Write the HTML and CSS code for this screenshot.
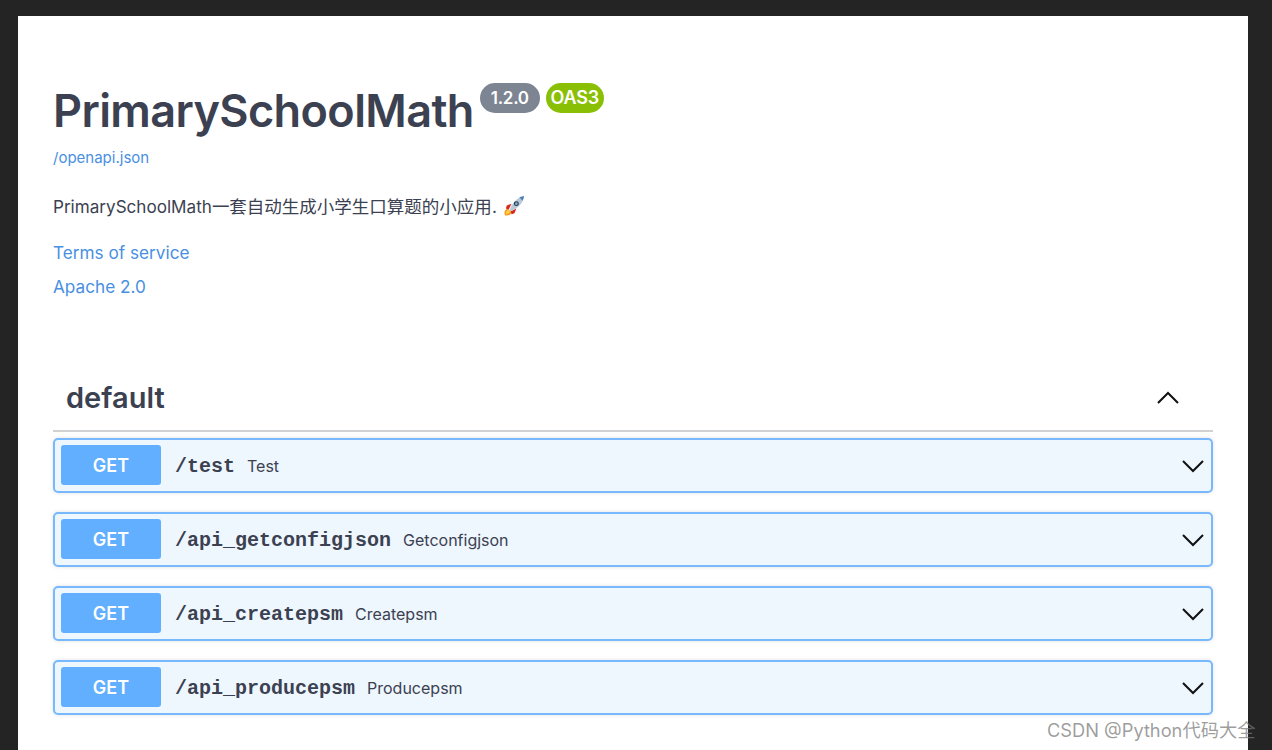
FILE: index.html
```html
<!DOCTYPE html>
<html lang="zh">
<head>
<meta charset="utf-8">
<title>PrimarySchoolMath</title>
<link rel="stylesheet" href="styles.css">
</head>
<body>
<main class="page">
  <header class="info">
    <div class="title-row">
      <h1 class="title">PrimarySchoolMath</h1>
      <span class="badge badge-version">1.2.0</span>
      <span class="badge badge-oas">OAS3</span>
    </div>
    <a class="spec-link">/openapi.json</a>
    <p class="description"><span>PrimarySchoolMath<span class="cjk">一套自动生成小学生口算题的小应用</span>.</span>
      <svg class="rocket" viewBox="0 0 24 24" aria-hidden="true">
        <path d="M3 21c-1-3 0-6 3-7l4 4c-1 3-4 4-7 3z" fill="#f59a1d"/>
        <path d="M4 20c0-2 1-4 2.500-4.500l2 2C8 19 6 20 4 20z" fill="#ffd23f"/>
        <path d="M5 11l5-2-3 6-3-1z" fill="#d9281e"/>
        <path d="M13 19l2-5-6 3 1 3z" fill="#d9281e"/>
        <path d="M8 16C10 9 15 3 23 1c-1 8-7 13-14 16z" fill="#b9c9d8"/>
        <path d="M18 2.400 23 1c-.3 2-.8 3.500-1.500 5z" fill="#4d7fb8"/>
        <circle cx="15" cy="9" r="2.600" fill="#2b3a4a"/>
        <circle cx="15" cy="9" r="1.400" fill="#7fb2dc"/>
      </svg>
    </p>
    <a class="info-link">Terms of service</a>
    <a class="info-link">Apache 2.0</a>
  </header>

  <section class="section">
    <div class="section-head">
      <h2 class="section-name">default</h2>
      <svg class="chevron" viewBox="0 0 24 14" aria-hidden="true"><path d="M2 12 12 2l10 10"/></svg>
    </div>
    <div class="ops">
      <div class="op">
        <span class="method">GET</span>
        <span class="path">/test</span>
        <span class="summary">Test</span>
        <svg class="chevron op-chevron" viewBox="0 0 24 14" aria-hidden="true"><path d="M2 2l10 10L22 2"/></svg>
      </div>
      <div class="op">
        <span class="method">GET</span>
        <span class="path">/api_getconfigjson</span>
        <span class="summary">Getconfigjson</span>
        <svg class="chevron op-chevron" viewBox="0 0 24 14" aria-hidden="true"><path d="M2 2l10 10L22 2"/></svg>
      </div>
      <div class="op">
        <span class="method">GET</span>
        <span class="path">/api_createpsm</span>
        <span class="summary">Createpsm</span>
        <svg class="chevron op-chevron" viewBox="0 0 24 14" aria-hidden="true"><path d="M2 2l10 10L22 2"/></svg>
      </div>
      <div class="op">
        <span class="method">GET</span>
        <span class="path">/api_producepsm</span>
        <span class="summary">Producepsm</span>
        <svg class="chevron op-chevron" viewBox="0 0 24 14" aria-hidden="true"><path d="M2 2l10 10L22 2"/></svg>
      </div>
    </div>
  </section>
</main>
<div class="watermark">CSDN @Python代码大全</div>
</body>
</html>
```

FILE: styles.css
```css
* { box-sizing: border-box; }

html, body {
  height: 750px;
  overflow: hidden;
}

body {
  margin: 0;
  padding: 16px 24px 0 18px;
  background: #242425;
  font-family: Inter, "Noto Sans CJK SC", sans-serif;
  color: #3b4151;
}

.page {
  height: 734px;
  background: #fff;
  padding: 67px 35px 0;
}

.title-row {
  display: flex;
  align-items: flex-start;
  height: 55px;
}

.title {
  margin: 0;
  font-size: 45px;
  line-height: 55px;
  font-weight: 600;
  color: #3b4151;
  letter-spacing: -0.6px;
}

.badge {
  height: 30px;
  line-height: 30px;
  border-radius: 15px;
  color: #fff;
  font-size: 17px;
  font-weight: 600;
  text-align: center;
  letter-spacing: -0.3px;
}

.badge-version {
  width: 60px;
  margin-left: 6px;
  background: #7d8492;
}

.badge-oas {
  width: 58px;
  margin-left: 6px;
  background: #89bf04;
  font-size: 18px;
  letter-spacing: -0.2px;
}

.spec-link {
  display: block;
  margin-top: 11px;
  font-size: 15px;
  line-height: 18px;
  color: #4990e2;
}

.description {
  margin: 28px 0 0;
  height: 24px;
  font-size: 17.100px;
  line-height: 24px;
  color: #3b4151;
  display: flex;
  align-items: center;
  gap: 5px;
}

.cjk { font-size: 17.500px; }

.rocket {
  width: 23px;
  height: 23px;
  margin-top: -1px;
}

.info-link {
  display: block;
  font-size: 17.200px;
  line-height: 24px;
  color: #4990e2;
  margin-top: 10px;
}

.description + .info-link { margin-top: 22px; }

.section { margin-top: 69px; }

.section-head {
  height: 64px;
  display: flex;
  align-items: center;
  justify-content: space-between;
  padding: 0 33px 2px 13px;
  border-bottom: 2px solid #d0d1d3;
}

.section-name {
  margin: 0;
  font-size: 29px;
  font-weight: 600;
  line-height: 36px;
  color: #3b4151;
}

.chevron {
  width: 24px;
  height: 14px;
  fill: none;
  stroke: #111;
  stroke-width: 2;
}

.ops {
  display: flex;
  flex-direction: column;
  gap: 19px;
  margin-top: 6px;
}

.op {
  height: 55px;
  display: flex;
  align-items: center;
  padding: 0 6px 0 6px;
  background: #eef6fe;
  border: 2px solid #78b9fe;
  border-radius: 5px;
  box-shadow: 0 0 4px rgba(0, 0, 0, 0.12);
}

.method {
  width: 100px;
  height: 40px;
  margin-bottom: 2px;
  line-height: 42px;
  text-align: center;
  background: #61affe;
  border-radius: 3px;
  color: #fff;
  font-size: 18px;
  font-weight: 600;
}

.path {
  margin: 2px 0 0 14px;
  font-family: "Liberation Mono", monospace;
  font-weight: 700;
  font-size: 20px;
  color: #3b4151;
}

.summary {
  margin-left: 12px;
  font-size: 16px;
  color: #3b4151;
}

.op-chevron { margin-left: auto; }

.watermark {
  position: absolute;
  left: 1047px;
  top: 718px;
  font-size: 18.250px;
  line-height: 24px;
  color: rgba(120, 120, 120, 0.72);
  white-space: nowrap;
}
```
